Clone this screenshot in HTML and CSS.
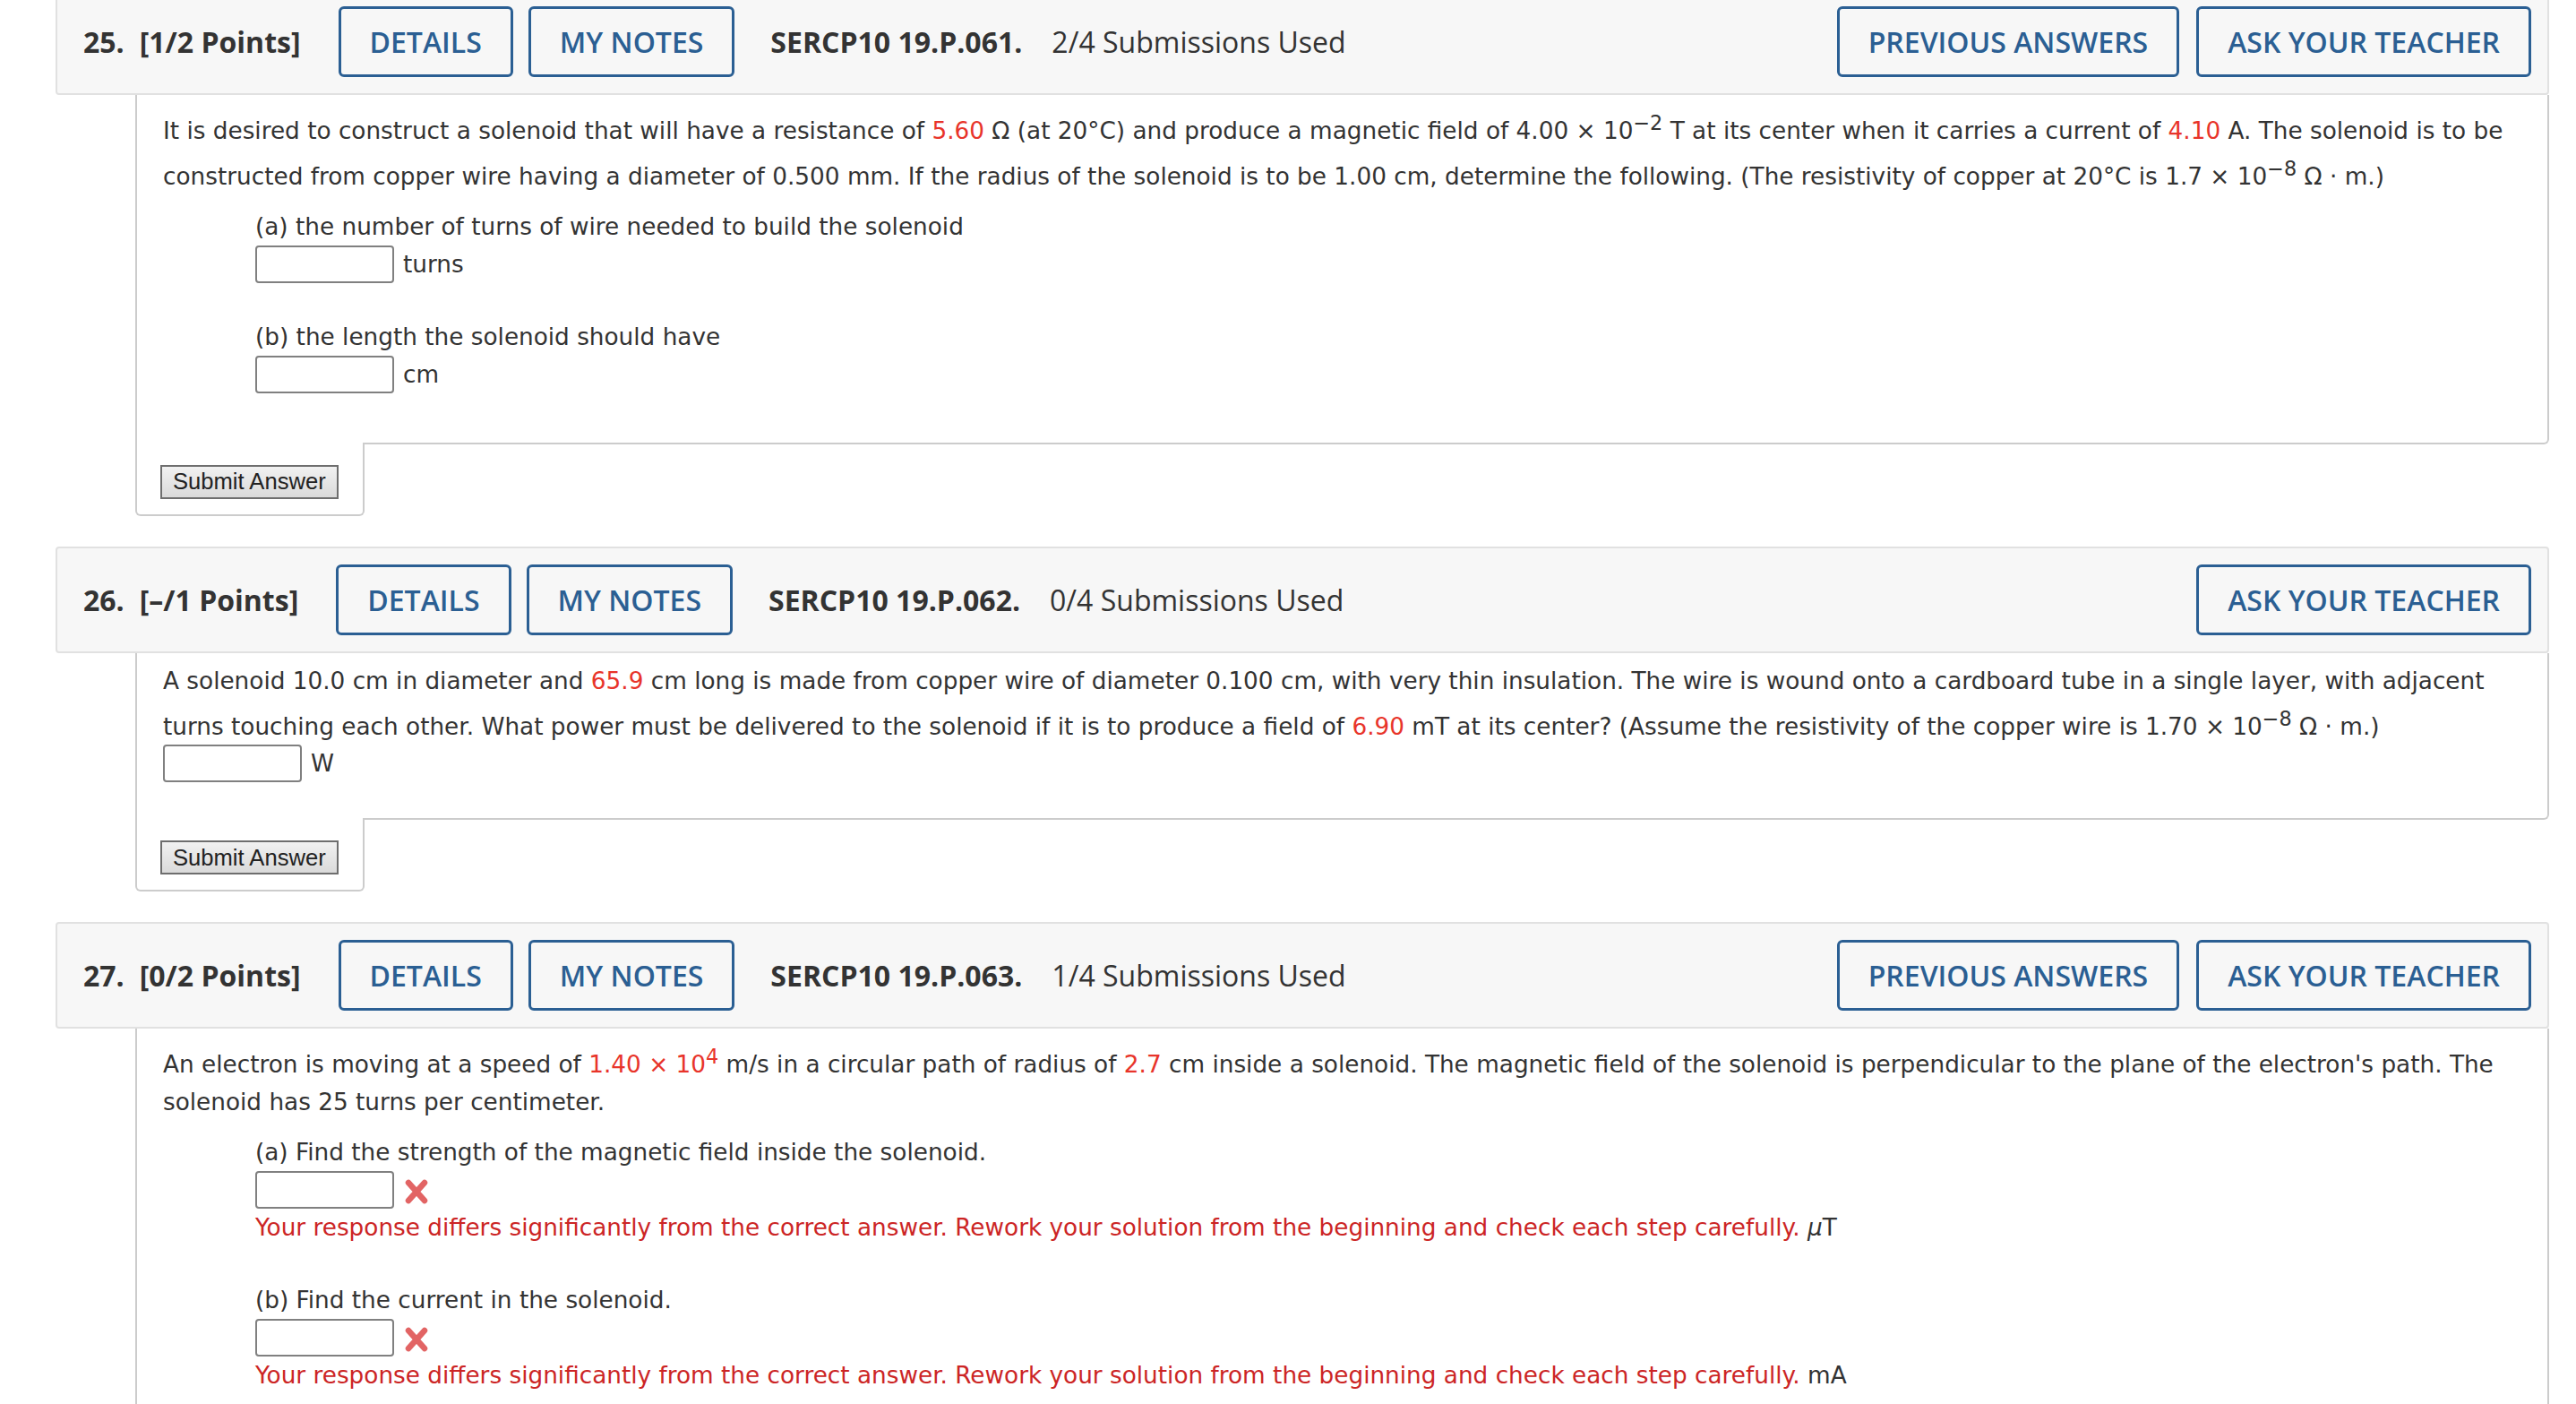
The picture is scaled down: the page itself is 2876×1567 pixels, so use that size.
FILE: index.html
```html
<!DOCTYPE html>
<html lang="en">
<head>
    <meta charset="UTF-8">
    <meta name="viewport" content="width=device-width, initial-scale=1.0">
    <title>Assignment</title>
    <link rel="stylesheet" href="styles.css">
</head>
<body>

    <main class="liste">

        <!-- spørgsmål 25 -->
        <section class="opgave">
            <header class="hoved">
                <span class="nr">25.</span>
                <span class="point">[1/2 Points]</span>
                <button class="knap forst">DETAILS</button>
                <button class="knap">MY NOTES</button>
                <span class="kode">SERCP10 19.P.061.</span>
                <span class="brugt">2/4 Submissions Used</span>
                <div class="hoejre">
                    <button class="knap">PREVIOUS ANSWERS</button>
                    <button class="knap">ASK YOUR TEACHER</button>
                </div>
            </header>
            <div class="indhold">
                <p class="tekst">It is desired to construct a solenoid that will have a resistance of <span class="vaerdi">5.60</span> &Omega; (at 20&deg;C) and produce a magnetic field of 4.00 &times; 10<sup>&minus;2</sup> T at its center when it carries a current of <span class="vaerdi">4.10</span> A. The solenoid is to be constructed from copper wire having a diameter of 0.500 mm. If the radius of the solenoid is to be 1.00 cm, determine the following. (The resistivity of copper at 20&deg;C is 1.7 &times; 10<sup>&minus;8</sup> &Omega; &middot; m.)</p>
                <div class="del">
                    <p class="spm">(a) the number of turns of wire needed to build the solenoid</p>
                    <div class="svar">
                        <input type="text">
                        <span>turns</span>
                    </div>
                </div>
                <div class="del">
                    <p class="spm">(b) the length the solenoid should have</p>
                    <div class="svar">
                        <input type="text">
                        <span>cm</span>
                    </div>
                </div>
            </div>
            <div class="fane">
                <button class="send">Submit Answer</button>
            </div>
        </section>

        <!-- spørgsmål 26 -->
        <section class="opgave">
            <header class="hoved">
                <span class="nr">26.</span>
                <span class="point">[&ndash;/1 Points]</span>
                <button class="knap forst">DETAILS</button>
                <button class="knap">MY NOTES</button>
                <span class="kode">SERCP10 19.P.062.</span>
                <span class="brugt">0/4 Submissions Used</span>
                <div class="hoejre">
                    <button class="knap">ASK YOUR TEACHER</button>
                </div>
            </header>
            <div class="indhold">
                <p class="tekst">A solenoid 10.0 cm in diameter and <span class="vaerdi">65.9</span> cm long is made from copper wire of diameter 0.100 cm, with very thin insulation. The wire is wound onto a cardboard tube in a single layer, with adjacent turns touching each other. What power must be delivered to the solenoid if it is to produce a field of <span class="vaerdi">6.90</span> mT at its center? (Assume the resistivity of the copper wire is 1.70 &times; 10<sup>&minus;8</sup> &Omega; &middot; m.)</p>
                <div class="svar enkelt">
                    <input type="text">
                    <span>W</span>
                </div>
            </div>
            <div class="fane">
                <button class="send">Submit Answer</button>
            </div>
        </section>

        <!-- spørgsmål 27 -->
        <section class="opgave">
            <header class="hoved">
                <span class="nr">27.</span>
                <span class="point">[0/2 Points]</span>
                <button class="knap forst">DETAILS</button>
                <button class="knap">MY NOTES</button>
                <span class="kode">SERCP10 19.P.063.</span>
                <span class="brugt">1/4 Submissions Used</span>
                <div class="hoejre">
                    <button class="knap">PREVIOUS ANSWERS</button>
                    <button class="knap">ASK YOUR TEACHER</button>
                </div>
            </header>
            <div class="indhold">
                <p class="tekst">An electron is moving at a speed of <span class="vaerdi">1.40 &times; 10<sup>4</sup></span> m/s in a circular path of radius of <span class="vaerdi">2.7</span> cm inside a solenoid. The magnetic field of the solenoid is perpendicular to the plane of the electron's path. The solenoid has 25 turns per centimeter.</p>
                <div class="del">
                    <p class="spm">(a) Find the strength of the magnetic field inside the solenoid.</p>
                    <div class="svar">
                        <input type="text">
                        <svg class="kryds" width="26" height="28" viewBox="0 0 26 28"><path d="M4 4 L22 24 M22 4 L4 24" stroke="#e26464" stroke-width="6.5" stroke-linecap="round"/></svg>
                    </div>
                    <p class="fejl">Your response differs significantly from the correct answer. Rework your solution from the beginning and check each step carefully. <span class="enhed"><i>&mu;</i>T</span></p>
                </div>
                <div class="del">
                    <p class="spm">(b) Find the current in the solenoid.</p>
                    <div class="svar">
                        <input type="text">
                        <svg class="kryds" width="26" height="28" viewBox="0 0 26 28"><path d="M4 4 L22 24 M22 4 L4 24" stroke="#e26464" stroke-width="6.5" stroke-linecap="round"/></svg>
                    </div>
                    <p class="fejl">Your response differs significantly from the correct answer. Rework your solution from the beginning and check each step carefully. <span class="enhed">mA</span></p>
                </div>
            </div>
        </section>

    </main>

</body>
</html>
```

FILE: styles.css
```css
body {
    margin: 0;
    background-color: #ffffff;
    color: #333333;
    overflow: hidden;
}

.liste {
    margin: -13px 30px 0 62px;
}

.opgave {
    margin-bottom: 34px;
}

/* grå topbjælke */
.hoved {
    display: flex;
    align-items: center;
    background-color: #f7f7f7;
    border: 2px solid #e1e1e1;
    border-radius: 4px;
    padding: 18px 18px 18px 29px;
    font-family: "Open Sans", sans-serif;
    font-size: 32px;
    color: #333333;
}

.nr {
    font-weight: 700;
    margin-right: 17px;
}

.point {
    font-weight: 700;
}

.kode {
    font-weight: 700;
    margin-left: 40px;
}

.brugt {
    margin-left: 33px;
}

.knap {
    height: 79px;
    padding: 0 32px;
    margin-left: 17px;
    background-color: transparent;
    border: 3px solid #2b5f93;
    border-radius: 6px;
    font-family: "Open Sans", sans-serif;
    font-size: 32px;
    font-weight: 600;
    color: #2b5f93;
}

.forst {
    margin-left: 42px;
}

.hoejre {
    margin-left: auto;
    display: flex;
}

.hoejre .knap {
    margin-left: 19px;
}

/* hvid boks med opgaveteksten */
.indhold {
    margin-left: 89px;
    border: 2px solid #cccccc;
    border-top: none;
    border-radius: 0 0 6px 0;
    padding: 10px 29px 16px 29px;
    font-family: "DejaVu Sans", sans-serif;
    font-size: 26.3px;
    line-height: 42px;
}

.indhold p {
    margin: 0;
}

sup {
    font-size: 85%;
}

.vaerdi {
    color: #e8342a;
}

.del {
    margin: 14px 0 39px 103px;
}

.svar {
    display: flex;
    align-items: center;
    gap: 10px;
}

.svar.enkelt {
    margin-top: 0;
    margin-bottom: 24px;
}

.svar input {
    width: 155px;
    height: 42px;
    box-sizing: border-box;
    border: 2px solid #808080;
    border-radius: 4px;
    margin: 0;
}

.kryds {
    margin-left: 2px;
    margin-top: 4px;
}

.fejl {
    color: #cc2525;
}

.enhed {
    color: #333333;
}

/* fanen med knappen */
.fane {
    margin: -2px 0 0 89px;
    width: 256px;
    box-sizing: border-box;
    background-color: #ffffff;
    border: 2px solid #cccccc;
    border-top: none;
    border-radius: 0 0 6px 6px;
    padding: 25px 0 17px 26px;
}

.send {
    height: 38px;
    padding: 0 12px;
    border: 2px solid #6e6e6e;
    background: linear-gradient(#f1f1f1, #dadada);
    font-family: "Liberation Sans", Arial, sans-serif;
    font-size: 25.6px;
    color: #222222;
}
```
